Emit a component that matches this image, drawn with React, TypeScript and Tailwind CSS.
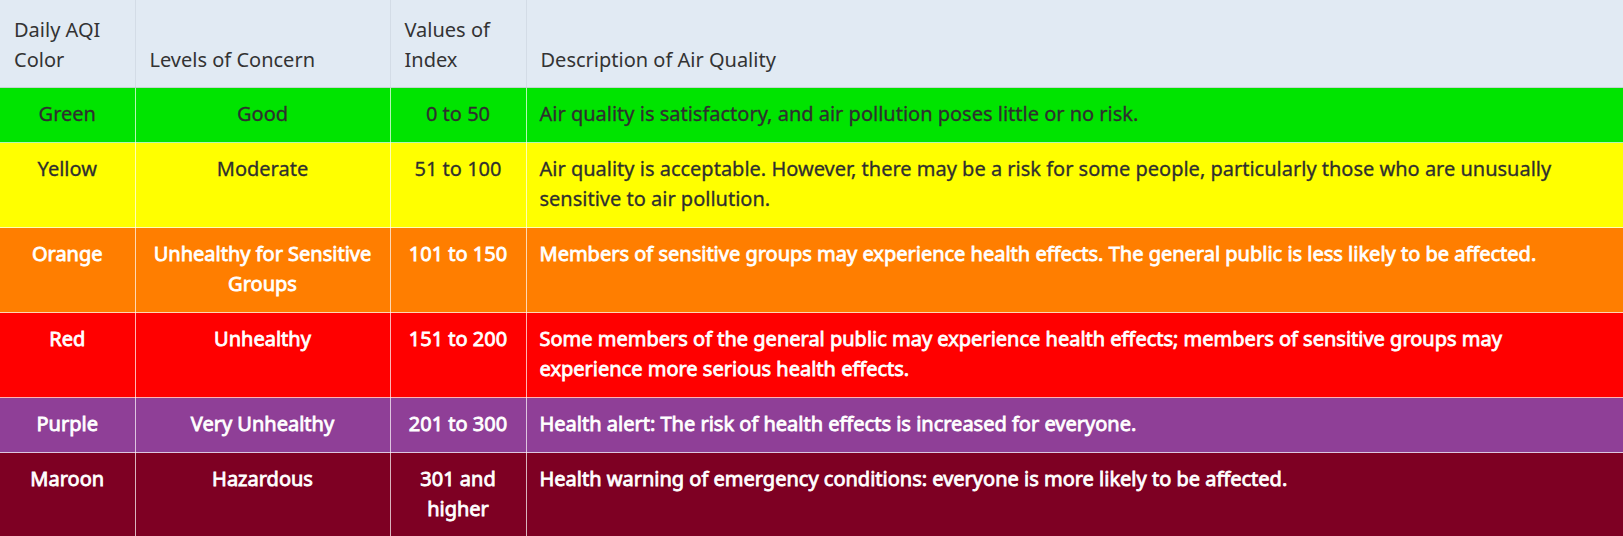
const ROWS = [
  {
    color: "Green",
    level: "Good",
    values: "0 to 50",
    desc: "Air quality is satisfactory, and air pollution poses little or no risk.",
    bg: "bg-[#00e400]",
    text: "text-[#2f2f2f] [-webkit-text-stroke:0.3px_#2f2f2f]",
  },
  {
    color: "Yellow",
    level: "Moderate",
    values: "51 to 100",
    desc: "Air quality is acceptable. However, there may be a risk for some people, particularly those who are unusually sensitive to air pollution.",
    bg: "bg-[#ffff00]",
    text: "text-[#2f2f2f] [-webkit-text-stroke:0.3px_#2f2f2f]",
  },
  {
    color: "Orange",
    level: "Unhealthy for Sensitive Groups",
    values: "101 to 150",
    desc: "Members of sensitive groups may experience health effects. The general public is less likely to be affected.",
    bg: "bg-[#ff7e00]",
    text: "text-white [-webkit-text-stroke:0.8px_white]",
  },
  {
    color: "Red",
    level: "Unhealthy",
    values: "151 to 200",
    desc: "Some members of the general public may experience health effects; members of sensitive groups may experience more serious health effects.",
    bg: "bg-[#ff0000]",
    text: "text-white [-webkit-text-stroke:0.8px_white]",
  },
  {
    color: "Purple",
    level: "Very Unhealthy",
    values: "201 to 300",
    desc: "Health alert: The risk of health effects is increased for everyone.",
    bg: "bg-[#8f3f97]",
    text: "text-white [-webkit-text-stroke:0.8px_white]",
  },
  {
    color: "Maroon",
    level: "Hazardous",
    values: "301 and higher",
    desc: "Health warning of emergency conditions: everyone is more likely to be affected.",
    bg: "bg-[#7e0023]",
    text: "text-white [-webkit-text-stroke:0.8px_white]",
  },
];

export default function App() {
  return (
    <div
      className="w-[1623px] bg-white text-[20px] leading-[30px]"
      style={{ fontFamily: '"Noto Sans", "Open Sans", sans-serif' }}
    >
      <table className="w-full table-fixed border-collapse">
        <colgroup>
          <col className="w-[135px]" />
          <col className="w-[255px]" />
          <col className="w-[136px]" />
          <col />
        </colgroup>
        <thead>
          <tr className="bg-[#e1eaf3] text-[#333]">
            {["Daily AQI Color", "Levels of Concern", "Values of Index", "Description of Air Quality"].map((h) => (
              <th
                key={h}
                className="border-r border-b border-r-[#d3dce6] border-b-[#c9cfd4] px-[14px] pt-[15px] pb-[12px] text-left align-bottom font-normal last:border-r-0"
              >
                {h}
              </th>
            ))}
          </tr>
        </thead>
        <tbody>
          {ROWS.map((r) => (
            <tr key={r.color} className={`${r.bg} ${r.text}`}>
              <td className="border-r border-b border-white/70 px-[12px] pt-[11px] pb-[13px] text-center align-top">
                {r.color}
              </td>
              <td className="border-r border-b border-white/70 px-[12px] pt-[11px] pb-[13px] text-center align-top">
                {r.level}
              </td>
              <td className="border-r border-b border-white/70 px-[12px] pt-[11px] pb-[13px] text-center align-top">
                {r.values}
              </td>
              <td className="border-b border-white/70 px-[13px] pt-[11px] pb-[13px] text-left align-top">
                {r.desc}
              </td>
            </tr>
          ))}
        </tbody>
      </table>
    </div>
  );
}
